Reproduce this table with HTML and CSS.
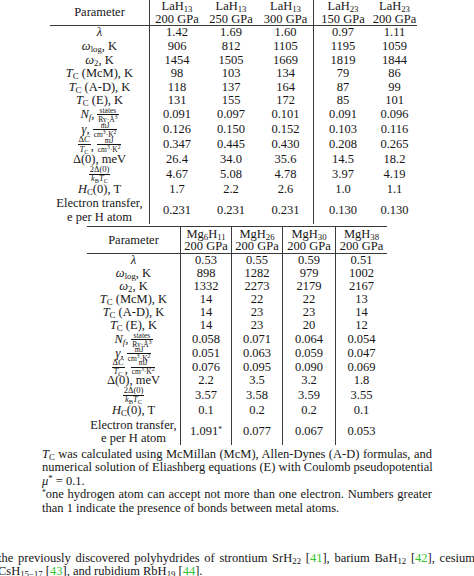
FILE: index.html
```html
<!DOCTYPE html>
<html>
<head>
<meta charset="utf-8">
<link rel="stylesheet" href="styles.css">
</head>
<body>
<div class="page">
<table class="t1">
<colgroup><col class="w100"><col class="w54"><col class="w54"><col class="w56"><col class="w58"><col class="w45"></colgroup>
<tr class="hd">
<th class="vr">Parameter</th>
<th>LaH<sub>13</sub><br>200 GPa</th>
<th>LaH<sub>13</sub><br>250 GPa</th>
<th class="vr">LaH<sub>13</sub><br>300 GPa</th>
<th>LaH<sub>23</sub><br>150 GPa</th>
<th>LaH<sub>23</sub><br>200 GPa</th>
</tr>
<tr class="h13"><td class="vr"><i>λ</i></td><td>1.42</td><td>1.69</td><td class="vr">1.60</td><td>0.97</td><td>1.11</td></tr>
<tr class="h14"><td class="vr"><i>ω</i><sub>log</sub>, K</td><td>906</td><td>812</td><td class="vr">1105</td><td>1195</td><td>1059</td></tr>
<tr class="h14"><td class="vr"><i>ω</i><sub>2</sub>, K</td><td>1454</td><td>1505</td><td class="vr">1669</td><td>1819</td><td>1844</td></tr>
<tr class="h13"><td class="vr"><i>T</i><sub>C</sub> (McM), K</td><td>98</td><td>103</td><td class="vr">134</td><td>79</td><td>86</td></tr>
<tr class="h14"><td class="vr"><i>T</i><sub>C</sub> (A-D), K</td><td>118</td><td>137</td><td class="vr">164</td><td>87</td><td>99</td></tr>
<tr class="h13"><td class="vr"><i>T</i><sub>C</sub> (E), K</td><td>131</td><td>155</td><td class="vr">172</td><td>85</td><td>101</td></tr>
<tr class="h15"><td class="vr"><span class="pc"><span class="lb"><i>N<sub>f</sub></i>,</span><span class="frac"><span>states</span><span>Ry·Å<sup>3</sup></span></span></span></td><td>0.091</td><td>0.097</td><td class="vr">0.101</td><td>0.091</td><td>0.096</td></tr>
<tr class="h15"><td class="vr"><span class="pc"><span class="lb"><i>γ</i>,</span><span class="frac"><span>mJ</span><span>cm<sup>3</sup>·K<sup>2</sup></span></span></span></td><td>0.126</td><td>0.150</td><td class="vr">0.152</td><td>0.103</td><td>0.116</td></tr>
<tr class="h15"><td class="vr"><span class="pc"><span class="frac big"><span>Δ<i>C</i></span><span><i>T</i><sub>C</sub></span></span><span class="cm">,</span><span class="frac"><span>mJ</span><span>cm<sup>3</sup>·K<sup>2</sup></span></span></span></td><td>0.347</td><td>0.445</td><td class="vr">0.430</td><td>0.208</td><td>0.265</td></tr>
<tr class="h14"><td class="vr">Δ(0), meV</td><td>26.4</td><td>34.0</td><td class="vr">35.6</td><td>14.5</td><td>18.2</td></tr>
<tr class="h16"><td class="vr"><span class="pc"><span class="frac big"><span>2Δ(0)</span><span><i>k</i><sub>B</sub><i>T</i><sub>C</sub></span></span></span></td><td>4.67</td><td>5.08</td><td class="vr">4.78</td><td>3.97</td><td>4.19</td></tr>
<tr class="h14"><td class="vr"><i>H</i><sub>C</sub>(0), T</td><td>1.7</td><td>2.2</td><td class="vr">2.6</td><td>1.0</td><td>1.1</td></tr>
<tr class="h28"><td class="vr two">Electron transfer,<br>e per H atom</td><td>0.231</td><td>0.231</td><td class="vr">0.231</td><td>0.130</td><td>0.130</td></tr>
</table>

<table class="t2">
<colgroup><col class="w94"><col class="w51"><col class="w51"><col class="w53"><col class="w51"></colgroup>
<tr class="hd">
<th class="vr">Parameter</th>
<th class="vr">Mg<sub>6</sub>H<sub>11</sub><br>200 GPa</th>
<th class="vr">MgH<sub>26</sub><br>200 GPa</th>
<th class="vr">MgH<sub>30</sub><br>200 GPa</th>
<th>MgH<sub>38</sub><br>200 GPa</th>
</tr>
<tr class="g1"><td class="vr"><i>λ</i></td><td class="vr">0.53</td><td class="vr">0.55</td><td class="vr">0.59</td><td>0.51</td></tr>
<tr class="g2"><td class="vr"><i>ω</i><sub>log</sub>, K</td><td class="vr">898</td><td class="vr">1282</td><td class="vr">979</td><td>1002</td></tr>
<tr class="g2"><td class="vr"><i>ω</i><sub>2</sub>, K</td><td class="vr">1332</td><td class="vr">2273</td><td class="vr">2179</td><td>2167</td></tr>
<tr class="g3"><td class="vr"><i>T</i><sub>C</sub> (McM), K</td><td class="vr">14</td><td class="vr">22</td><td class="vr">22</td><td>13</td></tr>
<tr class="g3"><td class="vr"><i>T</i><sub>C</sub> (A-D), K</td><td class="vr">14</td><td class="vr">23</td><td class="vr">23</td><td>14</td></tr>
<tr class="g3"><td class="vr"><i>T</i><sub>C</sub> (E), K</td><td class="vr">14</td><td class="vr">23</td><td class="vr">20</td><td>12</td></tr>
<tr class="g4"><td class="vr"><span class="pc"><span class="lb"><i>N<sub>f</sub></i>,</span><span class="frac"><span>states</span><span>Ry·Å<sup>3</sup></span></span></span></td><td class="vr">0.058</td><td class="vr">0.071</td><td class="vr">0.064</td><td>0.054</td></tr>
<tr class="g5"><td class="vr"><span class="pc"><span class="lb"><i>γ</i>,</span><span class="frac"><span>mJ</span><span>cm<sup>3</sup>·K<sup>2</sup></span></span></span></td><td class="vr">0.051</td><td class="vr">0.063</td><td class="vr">0.059</td><td>0.047</td></tr>
<tr class="g2"><td class="vr"><span class="pc"><span class="frac big"><span>Δ<i>C</i></span><span><i>T</i><sub>C</sub></span></span><span class="cm">,</span><span class="frac"><span>mJ</span><span>cm<sup>3</sup>·K<sup>2</sup></span></span></span></td><td class="vr">0.076</td><td class="vr">0.095</td><td class="vr">0.090</td><td>0.069</td></tr>
<tr class="g3"><td class="vr">Δ(0), meV</td><td class="vr">2.2</td><td class="vr">3.5</td><td class="vr">3.2</td><td>1.8</td></tr>
<tr class="g6"><td class="vr"><span class="pc"><span class="frac big"><span>2Δ(0)</span><span><i>k</i><sub>B</sub><i>T</i><sub>C</sub></span></span></span></td><td class="vr">3.57</td><td class="vr">3.58</td><td class="vr">3.59</td><td>3.55</td></tr>
<tr class="g7"><td class="vr"><i>H</i><sub>C</sub>(0), T</td><td class="vr">0.1</td><td class="vr">0.2</td><td class="vr">0.2</td><td>0.1</td></tr>
<tr class="g8"><td class="vr two2">Electron transfer,<br>e per H atom</td><td class="vr">1.091<sup class="ast">*</sup></td><td class="vr">0.077</td><td class="vr">0.067</td><td>0.053</td></tr>
</table>

<div class="notes">
<span class="ln j"><i>T</i><sub>C</sub> was calculated using McMillan (McM), Allen-Dynes (A-D) formulas, and</span>
<span class="ln j">numerical solution of Eliashberg equations (E) with Coulomb pseudopotential</span>
<span class="ln"><i>μ</i><sup>*</sup> = 0.1.</span>
<span class="ln j"><sup class="ast">*</sup>one hydrogen atom can accept not more than one electron. Numbers greater</span>
<span class="ln">than 1 indicate the presence of bonds between metal atoms.</span>
</div>

<div class="para">
<span class="ln j">the previously discovered polyhydrides of strontium SrH<sub>22</sub> [<span class="cite">41</span>], barium BaH<sub>12</sub> [<span class="cite">42</span>], cesium</span>
<span class="ln">CsH<sub>15−17</sub> [<span class="cite">43</span>], and rubidium RbH<sub>19</sub> [<span class="cite">44</span>].</span>
</div>
</div>
</body>
</html>
```

FILE: styles.css
```css
* { box-sizing: border-box; }
html, body { margin: 0; padding: 0; background: #fff; }
body {
  color: #161616;
  font-family: "Liberation Serif", "Times New Roman", serif;
  font-size: 12.5px;
}
.page { width: 474px; height: 576px; overflow: hidden; }

table { border-collapse: separate; border-spacing: 0; table-layout: fixed; }
th, td {
  padding: 0;
  text-align: center;
  vertical-align: middle;
  font-weight: normal;
  line-height: 13px;
  white-space: nowrap;
}
th { border-bottom: 1px solid #3a3a3a; line-height: 12.5px; }
.vr { border-right: 1px solid #3a3a3a; }

.t1 { margin: 0 0 0 50px; width: 367px; }
.t2 { margin: 2px 0 0 87px; width: 300px; border-top: 1px solid #3a3a3a; }

.w100 { width: 100px; } .w54 { width: 54px; } .w56 { width: 56px; }
.w58 { width: 58px; } .w45 { width: 45px; }
.w94 { width: 94px; } .w51 { width: 51px; } .w53 { width: 53px; }

.hd { height: 26px; }
.t2 .hd { height: 27px; }
.h13 { height: 13px; } .h14 { height: 14px; } .h15 { height: 15px; }
.h16 { height: 16px; } .h28 { height: 28px; }
.g1 { height: 11.5px; } .g2 { height: 12.5px; } .g3 { height: 13px; }
.g4 { height: 14.5px; } .g5 { height: 13.5px; } .g6 { height: 15.5px; }
.g7 { height: 16px; } .g8 { height: 25px; }
.two { line-height: 14px; }
.two2 { line-height: 13px; }

sub { font-size: 70%; vertical-align: -0.28em; line-height: 0; }
sup { font-size: 70%; vertical-align: 0.45em; line-height: 0; }
.ast { font-size: 60%; }

.pc {
  display: inline-flex;
  align-items: center;
  justify-content: center;
  vertical-align: middle;
}
.lb { margin-right: 3px; }
.cm { margin: 0 3px 0 0; position: relative; top: 2px; }

.frac {
  display: flex;
  flex-direction: column;
  text-align: center;
  font-size: 7.5px;
  line-height: 7px;
  margin: -1.5px 0;
}
.frac > span { display: block; }
.frac > span:first-child { border-bottom: 0.8px solid currentColor; padding: 0 1px 0.5px; }
.frac > span + span { padding: 0.5px 1px 0; }
.frac.big { font-size: 8.5px; line-height: 7.5px; }
.frac sub, .frac sup { font-size: 75%; }

.notes { margin: 3px 0 0 42px; width: 390px; line-height: 13.5px; }
.ln { display: block; white-space: nowrap; }
.j { text-align: justify; text-align-last: justify; }
.para { margin: 37px 0 0 -2px; width: 477px; line-height: 13px; }
.cite { color: #2fc42f; }
```
